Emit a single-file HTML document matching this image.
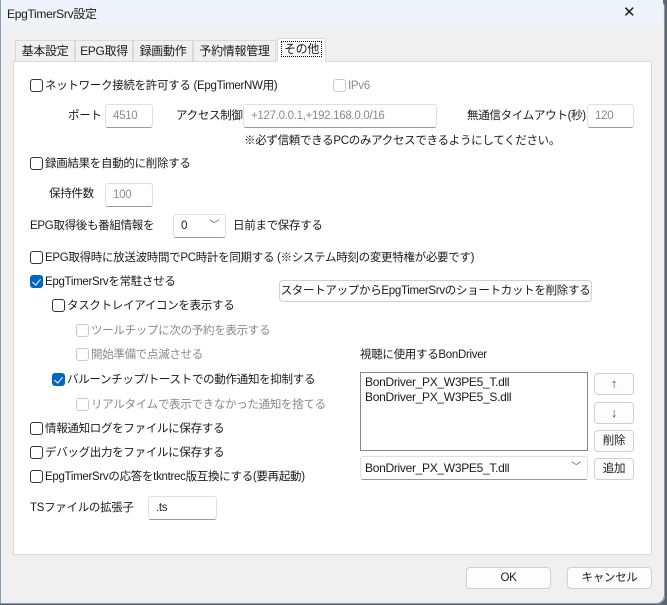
<!DOCTYPE html>
<html><head><meta charset="utf-8"><style>
*{box-sizing:border-box;margin:0;padding:0}
body{width:667px;height:605px;background:#5a6470;position:relative;overflow:hidden;font-family:"Liberation Sans","Noto Sans CJK JP",sans-serif;font-size:11.5px;letter-spacing:-0.3px;color:#1a1a1a}
.win{position:absolute;left:0;top:0;width:665px;height:604px;background:#f0f0f0;box-shadow:inset -1px -1px 0 #8a9aaa,inset 1px 0 0 #8a9aaa;border-radius:0 8px 8px 0}
.title{position:absolute;left:1px;top:0;width:662px;height:26px;background:#eef3f9}
.a{position:absolute;white-space:nowrap;line-height:16px}
.cb{position:absolute;width:13px;height:13px;border:1px solid #333;border-radius:3px;background:#fff}
.cb.d{border-color:#c8c8c8}
.cb.c{background:#0067c0;border-color:#0067c0}
.cb.c:after{content:"";position:absolute;left:3px;top:1px;width:4px;height:7px;border:solid #fff;border-width:0 1.5px 1.5px 0;transform:rotate(40deg)}
.g{color:#8a8a8a}
.in{position:absolute;background:#fff;border:1px solid #e0e0e0;border-bottom-color:#999;border-radius:3px;height:24px;line-height:22px;padding-left:7px;white-space:nowrap}
.btn{position:absolute;background:#fdfdfd;border:1px solid #d0d0d0;border-radius:4px;text-align:center;line-height:20px;white-space:nowrap}
.tab{position:absolute;top:40px;height:21px;line-height:20px;border:1px solid #d9d9d9;border-bottom:none;background:#f0f0f0;text-align:center;font-size:12px;white-space:nowrap}
</style></head><body>
<div class="win">
<div class="title"></div>
<div class="a" style="left:7px;top:6px;font-size:12px">EpgTimerSrv設定</div>
<div class="a" style="left:623px;top:5px;font-size:15px">✕</div>
<div class="tab" style="left:15px;width:60px">基本設定</div>
<div class="tab" style="left:75px;width:58px">EPG取得</div>
<div class="tab" style="left:133px;width:60px">録画動作</div>
<div class="tab" style="left:193px;width:83px">予約情報管理</div>
<div class="tab" style="left:277px;width:49px;top:38px;height:24px;background:#fff;z-index:2"><span style="border:1px dotted #000;padding:0 2px">その他</span></div>
<div style="position:absolute;left:13px;top:61px;width:639px;height:494px;background:#fff;border:1px solid #dcdcdc"></div>

<div class="cb" style="left:30px;top:79px"></div><div class="a" style="left:45px;top:78px">ネットワーク接続を許可する (EpgTimerNW用)</div>
<div class="cb d" style="left:333px;top:79px"></div><div class="a g" style="left:348px;top:78px">IPv6</div>
<div class="a" style="left:68px;top:108px">ポート</div>
<div class="in g" style="left:105px;top:104px;width:48px">4510</div>
<div class="a" style="left:176px;top:108px">アクセス制御</div>
<div class="in g" style="left:243px;top:104px;width:194px">+127.0.0.1,+192.168.0.0/16</div>
<div class="a" style="left:467px;top:108px">無通信タイムアウト(秒)</div>
<div class="in g" style="left:587px;top:104px;width:47px">120</div>
<div class="a" style="left:244px;top:133px">※必ず信頼できるPCのみアクセスできるようにしてください。</div>

<div class="cb" style="left:30px;top:157px"></div><div class="a" style="left:45px;top:156px">録画結果を自動的に削除する</div>
<div class="a" style="left:49px;top:186px">保持件数</div>
<div class="in g" style="left:105px;top:183px;width:48px">100</div>

<div class="a" style="left:30px;top:218px">EPG取得後も番組情報を</div>
<div class="in" style="left:173px;top:214px;width:53px">0<span style="position:absolute;right:6px;top:0;font-size:10px;color:#555">﹀</span></div>
<div class="a" style="left:233px;top:218px">日前まで保存する</div>

<div class="cb" style="left:30px;top:251px"></div><div class="a" style="left:45px;top:250px">EPG取得時に放送波時間でPC時計を同期する (※システム時刻の変更特権が必要です)</div>
<div class="cb c" style="left:30px;top:275px"></div><div class="a" style="left:45px;top:274px">EpgTimerSrvを常駐させる</div>
<div class="btn" style="left:279px;top:280px;width:313px;height:22px">スタートアップからEpgTimerSrvのショートカットを削除する</div>
<div class="cb" style="left:52px;top:299px"></div><div class="a" style="left:67px;top:298px">タスクトレイアイコンを表示する</div>
<div class="cb d" style="left:76px;top:324px"></div><div class="a g" style="left:91px;top:323px">ツールチップに次の予約を表示する</div>
<div class="cb d" style="left:76px;top:348px"></div><div class="a g" style="left:91px;top:347px">開始準備で点滅させる</div>
<div class="cb c" style="left:52px;top:373px"></div><div class="a" style="left:67px;top:372px">バルーンチップ/トーストでの動作通知を抑制する</div>
<div class="cb d" style="left:76px;top:398px"></div><div class="a g" style="left:91px;top:397px">リアルタイムで表示できなかった通知を捨てる</div>
<div class="cb" style="left:30px;top:422px"></div><div class="a" style="left:45px;top:421px">情報通知ログをファイルに保存する</div>
<div class="cb" style="left:30px;top:446px"></div><div class="a" style="left:45px;top:445px">デバッグ出力をファイルに保存する</div>
<div class="cb" style="left:30px;top:470px"></div><div class="a" style="left:45px;top:469px">EpgTimerSrvの応答をtkntrec版互換にする(要再起動)</div>
<div class="a" style="left:30px;top:500px">TSファイルの拡張子</div>
<div class="in" style="left:148px;top:496px;width:69px">.ts</div>

<div class="a" style="left:360px;top:347px">視聴に使用するBonDriver</div>
<div style="position:absolute;left:360px;top:372px;width:228px;height:79px;border:1px solid #828790;background:#fff;padding:2px 4px;line-height:15px;font-size:12px">BonDriver_PX_W3PE5_T.dll<br>BonDriver_PX_W3PE5_S.dll</div>
<div class="in" style="left:360px;top:456px;width:228px;padding-left:4px;font-size:12px">BonDriver_PX_W3PE5_T.dll<span style="position:absolute;right:6px;top:0;font-size:10px;color:#555">﹀</span></div>
<div class="btn" style="left:594px;top:373px;width:40px;height:22px;color:#0067c0;font-size:13px">↑</div>
<div class="btn" style="left:594px;top:402px;width:40px;height:22px;color:#0067c0;font-size:13px">↓</div>
<div class="btn" style="left:594px;top:430px;width:40px;height:22px">削除</div>
<div class="btn" style="left:594px;top:458px;width:40px;height:22px">追加</div>

<div class="btn" style="left:466px;top:567px;width:85px;height:22px">OK</div>
<div class="btn" style="left:567px;top:567px;width:85px;height:22px">キャンセル</div>
</div>
</body></html>
